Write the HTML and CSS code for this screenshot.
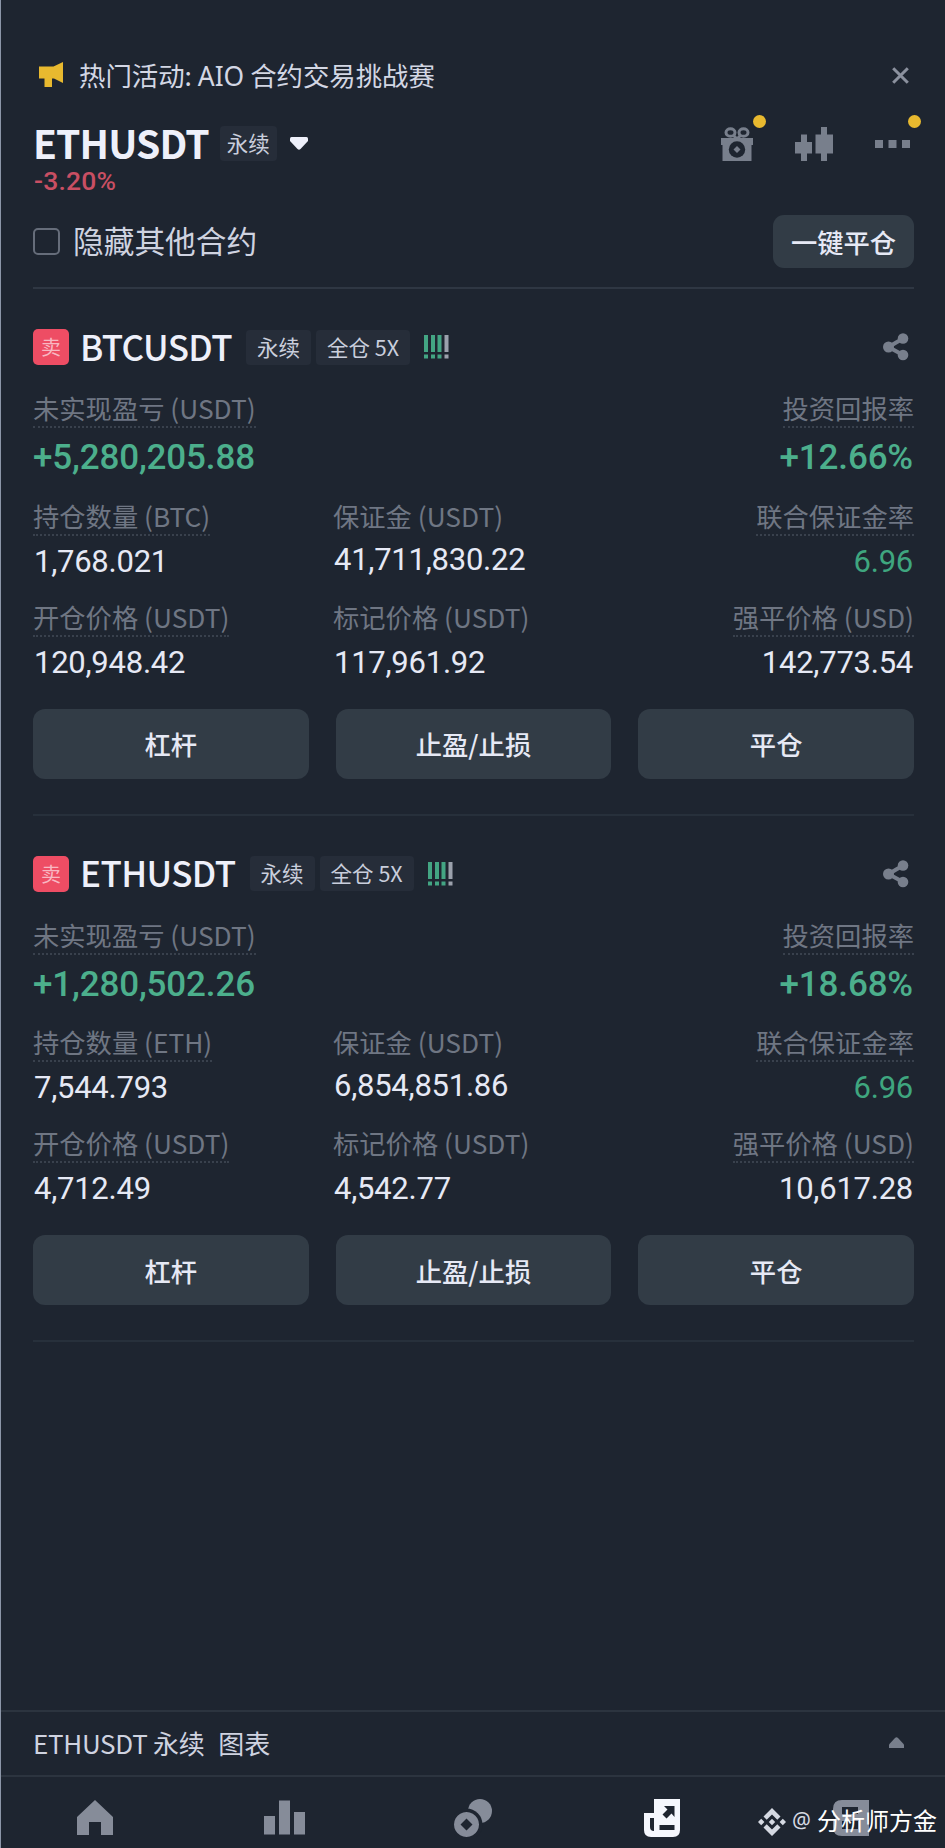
FILE: index.html
```html
<!DOCTYPE html>
<html lang="zh-CN">
<head>
<meta charset="utf-8">
<title>ETHUSDT 永续</title>
<link rel="stylesheet" href="styles.css">
</head>
<body>
<div class="app">
  <div class="promo">
    <svg class="horn" width="26" height="28" viewBox="0 0 26 28" fill="#e8b92f"><path d="M1 5.500h14.500L25 1v21l-9-4.500h-2V26H6.500V17.500H1z"/></svg>
    <span class="promo-text">热门活动: <span class="noto">AIO</span> 合约交易挑战赛</span>
    <svg class="close" width="17" height="17" viewBox="0 0 17 17" stroke="#8b919e" stroke-width="3" fill="none"><path d="M1.200 1.200l14.600 14.600M15.800 1.200L1.200 15.800"/></svg>
  </div>

  <header class="head">
    <h1 class="pair">ETHUSDT</h1>
    <span class="tag tag-head">永续</span>
    <svg class="caret" width="18" height="13" viewBox="0 0 18 13" fill="#eef0fa"><path d="M1.500 0h15q1.500 0 1.500 1.500V4L10.500 12q-1.500 1.500-3 0L0 4V1.500Q0 0 1.500 0z"/></svg>
    <div class="tools">
      <span class="tool gift">
        <svg width="32" height="34" viewBox="0 0 32 34"><g fill="none" stroke="#787f8c" stroke-width="3"><ellipse cx="9.500" cy="5.500" rx="4.500" ry="3.800"/><ellipse cx="22.500" cy="5.500" rx="4.500" ry="3.800"/><path d="M12 8l4 4 4-4"/></g><path fill="#787f8c" d="M0 11h32v7h-1.500v16H1.500V18H0z"/><circle cx="16" cy="22.500" r="8.200" fill="#1e2530"/><path fill="#787f8c" d="M16 19l3.500 3.500L16 26l-3.500-3.500z"/></svg>
        <i class="dot"></i>
      </span>
      <svg class="tool candles" width="38" height="34" viewBox="0 0 38 34" fill="#787f8c"><path d="M6 7.500h6V15h5v11.500h-5V34H6v-7.500H0V15h6zM26 0h6v7.500h6v19h-6V34h-6v-7.500h-5.500v-19H26z"/></svg>
      <span class="tool more">
        <svg width="35" height="8" viewBox="0 0 35 8" fill="#787f8c"><path d="M0 0h8v8H0zM13.500 0h8v8h-8zM27 0h8v8h-8z"/></svg>
        <i class="dot"></i>
      </span>
    </div>
  </header>
  <div class="change">-3.20%</div>

  <div class="filter">
    <span class="check"></span>
    <span class="filter-text">隐藏其他合约</span>
    <button class="close-all">一键平仓</button>
  </div>

  <section class="card">
    <div class="card-head">
      <span class="side">卖</span>
      <h2 class="sym">BTCUSDT</h2>
      <span class="tag">永续</span><span class="tag">全仓 5X</span>
      <svg class="risk" width="25" height="24" viewBox="0 0 25 24"><path fill="#43a583" d="M0 0h4v17H0zM7 0h4v17H7zM13.500 0h4v17h-4zM0 19.500h4v4H0zM7 19.500h4v4H7zM13.500 19.500h4v4h-4z"/><path fill="#9ba1ac" d="M20.500 0h4v17h-4zM20.500 19.500h4v4h-4z"/></svg>
      <svg class="share" width="26" height="28" viewBox="0 0 26 28" fill="#787f8c"><path d="M5.500 14L20 5.500M5.500 14L20 22" stroke="#787f8c" stroke-width="4"/><circle cx="5.500" cy="14" r="5.500"/><circle cx="20" cy="5.500" r="5.300"/><circle cx="20" cy="22" r="5.300"/></svg>
    </div>
    <div class="row pnl">
      <div class="cell"><span class="label dotted">未实现盈亏 (USDT)</span><b class="big">+5,280,205.88</b></div>
      <div class="cell end"><span class="label dotted">投资回报率</span><b class="big">+12.66%</b></div>
    </div>
    <div class="row three">
      <div class="cell"><span class="label dotted">持仓数量 (BTC)</span><span class="num">1,768.021</span></div>
      <div class="cell up"><span class="label">保证金 (USDT)</span><span class="num">41,711,830.22</span></div>
      <div class="cell end"><span class="label dotted">联合保证金率</span><span class="num green">6.96</span></div>
    </div>
    <div class="row three last">
      <div class="cell"><span class="label dotted">开仓价格 (USDT)</span><span class="num">120,948.42</span></div>
      <div class="cell"><span class="label">标记价格 (USDT)</span><span class="num">117,961.92</span></div>
      <div class="cell end"><span class="label dotted">强平价格 (USD)</span><span class="num">142,773.54</span></div>
    </div>
    <div class="actions"><button>杠杆</button><button>止盈/止损</button><button>平仓</button></div>
  </section>

  <section class="card">
    <div class="card-head">
      <span class="side">卖</span>
      <h2 class="sym">ETHUSDT</h2>
      <span class="tag">永续</span><span class="tag">全仓 5X</span>
      <svg class="risk" width="25" height="24" viewBox="0 0 25 24"><path fill="#43a583" d="M0 0h4v17H0zM7 0h4v17H7zM13.500 0h4v17h-4zM0 19.500h4v4H0zM7 19.500h4v4H7zM13.500 19.500h4v4h-4z"/><path fill="#9ba1ac" d="M20.500 0h4v17h-4zM20.500 19.500h4v4h-4z"/></svg>
      <svg class="share" width="26" height="28" viewBox="0 0 26 28" fill="#787f8c"><path d="M5.500 14L20 5.500M5.500 14L20 22" stroke="#787f8c" stroke-width="4"/><circle cx="5.500" cy="14" r="5.500"/><circle cx="20" cy="5.500" r="5.300"/><circle cx="20" cy="22" r="5.300"/></svg>
    </div>
    <div class="row pnl">
      <div class="cell"><span class="label dotted">未实现盈亏 (USDT)</span><b class="big">+1,280,502.26</b></div>
      <div class="cell end"><span class="label dotted">投资回报率</span><b class="big">+18.68%</b></div>
    </div>
    <div class="row three">
      <div class="cell"><span class="label dotted">持仓数量 (ETH)</span><span class="num">7,544.793</span></div>
      <div class="cell up"><span class="label">保证金 (USDT)</span><span class="num">6,854,851.86</span></div>
      <div class="cell end"><span class="label dotted">联合保证金率</span><span class="num green">6.96</span></div>
    </div>
    <div class="row three last">
      <div class="cell"><span class="label dotted">开仓价格 (USDT)</span><span class="num">4,712.49</span></div>
      <div class="cell"><span class="label">标记价格 (USDT)</span><span class="num">4,542.77</span></div>
      <div class="cell end"><span class="label dotted">强平价格 (USD)</span><span class="num">10,617.28</span></div>
    </div>
    <div class="actions"><button>杠杆</button><button>止盈/止损</button><button>平仓</button></div>
  </section>

  <div class="chart-bar">
    <span class="chart-pair">ETHUSDT 永续</span><span>图表</span>
    <svg width="15" height="11" viewBox="0 0 15 11" fill="#787f8c"><path d="M0 11V7.500L6 1q1.500-1.500 3 0l6 6.500V11z"/></svg>
  </div>
  <nav class="tabs">
    <svg class="tab" width="36" height="35" viewBox="0 0 36 35" fill="#868c99"><path d="M18 0l18 17v18H24V22H12v13H0V17z"/></svg>
    <svg class="tab" width="41" height="35" viewBox="0 0 41 35" fill="#868c99"><path d="M0 16h11v18.500H0zM15 .5h11v34H15zM30 12h11v22.500H30z"/></svg>
    <svg class="tab" width="38" height="38" viewBox="0 0 38 38"><circle cx="26" cy="12" r="12" fill="#868c99"/><circle cx="12.500" cy="25.500" r="16" fill="#1e2530"/><path fill="#868c99" fill-rule="evenodd" d="M12.500 13a12.500 12.500 0 1 0 .01 0zM12.500 19.500l6 6-6 6-6-6z"/></svg>
    <svg class="tab" width="36" height="38" viewBox="0 0 36 38"><path fill="#f5f7fd" d="M10 0h26v31q0 7-7 7H7q-7 0-7-7V14h10z"/><path fill="#1e2530" d="M6 19h4v13q-4 0-4-4zM15.500 26h15v5h-15zM20 7h10.500v11l-3-3.500-5 5-4-4 5-5z"/></svg>
    <svg class="tab" width="36" height="36" viewBox="0 0 36 36"><path fill="#868c99" d="M9 0h27v36H9q-9 0-9-9v-6l3-3-3-3V9q0-9 9-9z"/><path fill="#1e2530" d="M9 7h16v7H9zM9 21h16v8H9z"/></svg>
  </nav>
  <div class="watermark">
    <svg width="28" height="28" viewBox="0 0 28 28" fill="#d5d9e2"><path d="M14 0l8.500 8.500-3.200 3.200L14 6.400l-5.300 5.300-3.200-3.200zM14 28l8.500-8.500-3.200-3.200-5.300 5.300-5.300-5.300-3.200 3.200zM3.200 10.800L6.400 14l-3.200 3.200L0 14zM24.800 10.800L28 14l-3.200 3.200-3.200-3.200zM14 10.800l3.200 3.200-3.200 3.200-3.200-3.200z"/></svg>
    <span class="at">@</span><span class="who">分析师方金</span>
  </div>
</div>
</body>
</html>
```

FILE: styles.css
```css
* { box-sizing: border-box; }
body {
  margin: 0;
  background: #1e2530;
  color: #e2e6f2;
  font-family: "Noto Sans CJK SC", sans-serif;
}
.app {
  position: relative;
  display: flex;
  flex-direction: column;
  height: 1848px;
  padding-top: 55px;
  overflow: hidden;
  border-left: 1px solid #8c96a8;
}
svg { display: block; flex: none; }
h1, h2 { margin: 0; }
button {
  border: 0;
  padding: 0;
  background: #323c46;
  color: #e6e9f5;
  font-family: inherit;
}

.promo { display: flex; align-items: center; height: 40px; padding: 0 36px 0 37px; }
.promo-text { margin-left: 15px; font-size: 26.4px; line-height: 40px; color: #d3d7e4; white-space: nowrap; }
.noto { font-family: "Noto Sans", sans-serif; }
.close { margin-left: auto; }

.head { display: flex; align-items: center; height: 71px; margin-top: 13px; padding-left: 32px; }
.pair { margin-top: -3px; font-size: 39px; line-height: 40px; font-weight: 700; letter-spacing: -0.9px; color: #eef0fa; }
.tag {
  height: 35px;
  padding: 0 11px;
  border-radius: 4px;
  background: #262d39;
  font-size: 21.5px;
  line-height: 34px;
  color: #c9cedc;
  white-space: nowrap;
}
.tag-head { margin: -1px 0 0 11px; padding: 0 7px; }
.caret { margin-left: 13px; }
.tools { display: flex; align-items: center; margin-left: auto; padding-right: 35px; }
.tool { position: relative; }
.candles { margin: 0 42px; }
.dot { position: absolute; width: 13px; height: 13px; border-radius: 50%; background: #e8b92f; }
.gift .dot { top: -12px; right: -13px; }
.more .dot { top: -25px; right: -11px; }
.change {
  height: 30px;
  margin-top: -13px;
  padding-left: 33px;
  font: 500 26.5px/30px Roboto, sans-serif;
  letter-spacing: 0.2px;
  color: #c94f63;
}

.filter {
  display: flex;
  align-items: center;
  height: 93px;
  margin: 0 31px 0 32px;
  border-bottom: 2px solid #2f3743;
}
.check { width: 27px; height: 27px; margin-top: -1px; border: 2px solid #666d7a; border-radius: 5px; }
.filter-text { margin: -3px 0 0 13px; font-size: 30.7px; line-height: 44px; color: #cfd3e0; }
.close-all { width: 141px; height: 53px; margin: -1px 0 0 auto; border-radius: 11px; font-size: 26.3px; line-height: 51px; font-weight: 500; }

.card { height: 526.5px; margin: 0 31px 0 32px; padding-top: 40px; border-bottom: 2px solid #27303b; }
.card-head { display: flex; align-items: center; height: 36px; }
.side {
  width: 36px;
  height: 36px;
  border-radius: 5px;
  background: #ee4d64;
  font-size: 20px;
  line-height: 36px;
  text-align: center;
  color: #f8b7c2;
}
.sym { margin: -3px 0 0 11px; font-size: 35px; line-height: 36px; font-weight: 500; letter-spacing: -0.6px; color: #eef0fa; }
.tag + .tag { margin-left: 5px; }
.sym + .tag { margin-left: 14px; }
.risk { margin-left: 14px; }
.share { margin-left: auto; margin-right: 5px; }
.row { display: flex; justify-content: space-between; }
.pnl { height: 131.5px; padding-top: 24px; }
.three { display: grid; grid-template-columns: 300px 1fr 1fr; height: 101px; }
.last { height: 111px; }
.cell { display: flex; flex-direction: column; align-items: flex-start; }
.end { align-items: flex-end; }
.label { height: 39px; font-size: 26.3px; line-height: 38px; color: #6f7683; white-space: nowrap; border-bottom: 2px solid transparent; }
.dotted { border-bottom: 2px dotted #39414d; }
.big { height: 44px; margin-top: 8px; font: 500 35px/44px Roboto, sans-serif; letter-spacing: -0.15px; color: #4caf8c; }
.num { margin: 6px 0 0 1px; font: 400 31px/40px Roboto, sans-serif; letter-spacing: -0.25px; color: #e6e9f5; }
.end .num, .end .big { margin-right: 1px; }
.up .num { margin-top: 4px; }
.num.green { color: #3fa67f; }
.actions { display: grid; grid-template-columns: repeat(3, 1fr); gap: 27px; }
.actions button { height: 70px; border-radius: 12px; font-size: 26.3px; font-weight: 500; }

.chart-bar {
  display: flex;
  align-items: center;
  gap: 14px;
  height: 65px;
  margin-top: auto;
  padding: 0 41px 2px 32px;
  border-top: 2px solid #2c343f;
  font-size: 26px;
  color: #cfd3e0;
}
.chart-pair { letter-spacing: -0.3px; }
.chart-bar svg { margin-left: auto; }
.tabs {
  display: grid;
  grid-template-columns: repeat(5, 1fr);
  justify-items: center;
  align-items: center;
  height: 73px;
  padding-top: 10px;
  flex: none;
  border-top: 2px solid #2c343f;
}
.watermark {
  position: absolute;
  right: 8px;
  bottom: 9px;
  display: flex;
  align-items: center;
  height: 36px;
  color: #fff;
  white-space: nowrap;
}
.watermark svg { margin-top: 2px; }
.at { margin: -3px 6px 0 6px; font: 21px/30px "Noto Sans", sans-serif; color: #d5d9e2; }
.who { margin-top: -3px; font-size: 24px; }
```
